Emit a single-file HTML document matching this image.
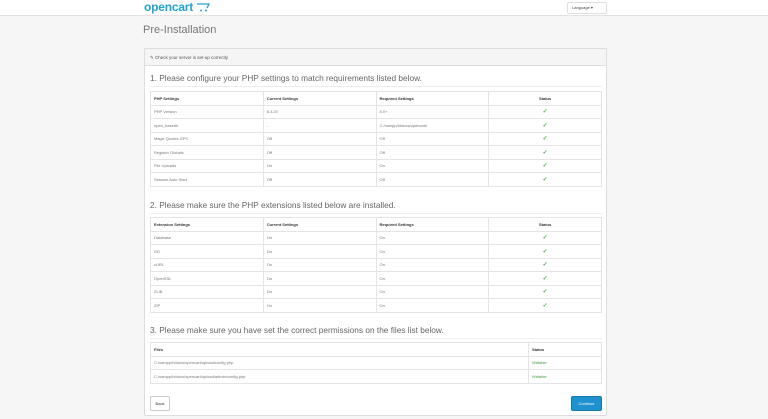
<!DOCTYPE html>
<html><head><meta charset="utf-8"><style>
*{box-sizing:border-box;margin:0;padding:0}
body{width:768px;height:419px;overflow:hidden;background:#f6f6f6;font-family:"Liberation Sans",sans-serif;color:#555;position:relative}
.hdr{position:absolute;left:0;top:0;width:768px;height:16px;background:#fff;border-bottom:1px solid #e2e2e2}
.logo{position:absolute;left:144px;top:0px;font-size:12px;font-weight:bold;color:#23a1d1;letter-spacing:-0.2px}
.lang{position:absolute;left:567px;top:2px;width:40px;height:12px;border:1px solid #ddd;border-radius:2px;font-size:4px;line-height:10px;padding-left:4px;color:#444;background:#fff}
h1{position:absolute;left:143px;top:24px;font-size:11px;font-weight:normal;color:#777}
.panel{position:absolute;left:144px;top:48px;width:463px;height:368px;background:#fff;border:1px solid #ddd;border-radius:2px}
.ph{height:17px;background:#f5f5f5;border-bottom:1px solid #ddd;font-size:4.5px;line-height:17px;padding-left:5px;color:#555}
h3{position:absolute;left:5px;font-size:8.3px;font-weight:normal;color:#666;width:452px;border-bottom:1px solid #eee;height:14px;line-height:10px}
table{position:absolute;left:5px;width:452px;border-collapse:collapse;font-size:4px;table-layout:fixed}
td,th{border:1px solid #e4e4e4;height:13.5px;padding:0 3px;text-align:left;color:#777}
th{font-weight:bold;color:#333}
.c{text-align:center}
.ok{color:#4caf50;text-align:center;font-size:6px;font-weight:bold}
.w{color:#3c9a3c}
.btn{position:absolute;top:347px;height:15px;font-size:4px;line-height:13px;text-align:center;border-radius:2px}
</style></head><body>
<div class="hdr"><div class="logo">opencart <svg width="14" height="9" viewBox="0 0 14 9" style="vertical-align:-1px"><path d="M1 1h12l-2 4" stroke="#23a1d1" stroke-width="1.3" fill="none"/><circle cx="5" cy="7.5" r="1" fill="#23a1d1"/><circle cx="10" cy="7.5" r="1" fill="#23a1d1"/></svg></div>
<div class="lang">Language ▾</div></div>
<h1>Pre-Installation</h1>
<div class="panel">
<div class="ph">✎ Check your server is set-up correctly</div>
<h3 style="top:24px">1. Please configure your PHP settings to match requirements listed below.</h3>
<table style="top:42px"><tr><th>PHP Settings</th><th>Current Settings</th><th>Required Settings</th><th class="c">Status</th></tr>
<tr><td>PHP Version</td><td>8.3.20</td><td>8.0+</td><td class="ok">✓</td></tr>
<tr><td>open_basedir</td><td>-</td><td>C:/xampp/htdocs/opencart/</td><td class="ok">✓</td></tr>
<tr><td>Magic Quotes GPC</td><td>Off</td><td>Off</td><td class="ok">✓</td></tr>
<tr><td>Register Globals</td><td>Off</td><td>Off</td><td class="ok">✓</td></tr>
<tr><td>File Uploads</td><td>On</td><td>On</td><td class="ok">✓</td></tr>
<tr><td>Session Auto Start</td><td>Off</td><td>Off</td><td class="ok">✓</td></tr></table>
<h3 style="top:151px">2. Please make sure the PHP extensions listed below are installed.</h3>
<table style="top:168px"><tr><th>Extension Settings</th><th>Current Settings</th><th>Required Settings</th><th class="c">Status</th></tr>
<tr><td>Database</td><td>On</td><td>On</td><td class="ok">✓</td></tr>
<tr><td>GD</td><td>On</td><td>On</td><td class="ok">✓</td></tr>
<tr><td>cURL</td><td>On</td><td>On</td><td class="ok">✓</td></tr>
<tr><td>OpenSSL</td><td>On</td><td>On</td><td class="ok">✓</td></tr>
<tr><td>ZLIB</td><td>On</td><td>On</td><td class="ok">✓</td></tr>
<tr><td>ZIP</td><td>On</td><td>On</td><td class="ok">✓</td></tr></table>
<h3 style="top:276px">3. Please make sure you have set the correct permissions on the files list below.</h3>
<table style="top:293px"><col style="width:378px"><col><tr><th>Files</th><th>Status</th></tr>
<tr><td>C:/xampp/htdocs/opencart/upload/config.php</td><td class="w">Writable</td></tr>
<tr><td>C:/xampp/htdocs/opencart/upload/admin/config.php</td><td class="w">Writable</td></tr></table>
<div class="btn" style="left:5px;width:20px;border:1px solid #ccc;background:#fff;color:#333">Back</div>
<div class="btn" style="left:426px;width:31px;background:#1e91cf;border:1px solid #1978ab;color:#fff">Continue</div>
</div>
</body></html>
